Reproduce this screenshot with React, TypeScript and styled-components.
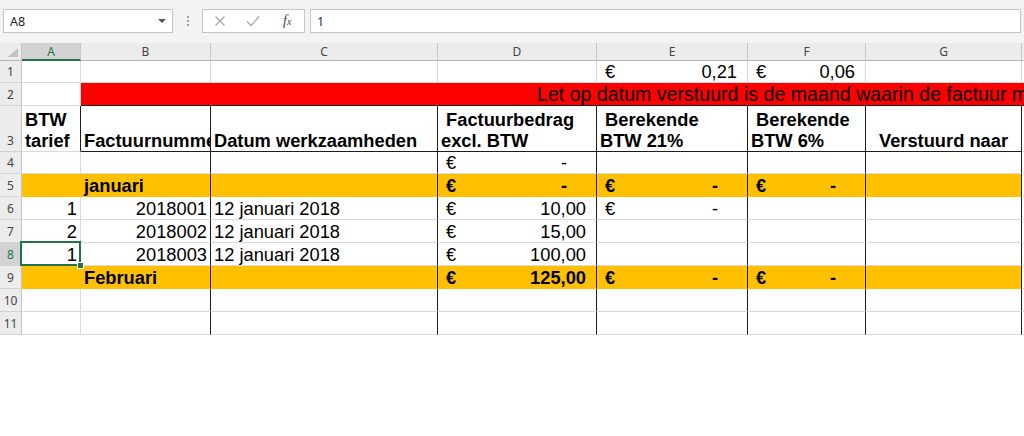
import React from 'react';
import styled, { createGlobalStyle } from 'styled-components';

const GRID = '#dadada';
const BORDER = '#1c1c1c';
const YELLOW = '#ffc000';
const RED = '#ff0000';
const GREEN = '#217346';
const HEAD_BG = '#ececec';
const HEAD_LINE = '#c6c6c6';

const GlobalStyle = createGlobalStyle`
  html, body { margin: 0; padding: 0; background: #fff; }
  body { font-family: "Liberation Sans", Arial, sans-serif; }
`;

const Toolbar = styled.div`
  display: flex;
  align-items: flex-start;
  height: 43px;
  box-sizing: border-box;
  padding: 9px 3px 0 3px;
  background: #f3f3f3;
`;

const NameBox = styled.div`
  box-sizing: border-box;
  width: 170px;
  height: 24px;
  background: #fff;
  border: 1px solid ${HEAD_LINE};
  display: flex;
  align-items: center;
  justify-content: space-between;
  padding: 0 6px 0 6px;
  font: 12.5px "Noto Sans", sans-serif;
  color: #222;
`;

const Grip = styled.div`
  width: 29px;
  height: 24px;
  display: flex;
  flex-direction: column;
  align-items: center;
  justify-content: center;
  gap: 2px;
`;

const Dot = styled.span`
  width: 2px;
  height: 2px;
  background: #a0a0a0;
`;

const FxBox = styled.div`
  box-sizing: border-box;
  width: 103px;
  height: 24px;
  background: #fff;
  border: 1px solid ${HEAD_LINE};
  display: grid;
  grid-template-columns: repeat(3, 1fr);
  align-items: center;
  justify-items: center;
`;

const FxLabel = styled.span`
  font: italic 14px "Liberation Serif", serif;
  color: #444;
  & > small { font-size: 10px; }
`;

const FormulaInput = styled.div`
  box-sizing: border-box;
  flex: 1;
  height: 24px;
  margin-left: 5px;
  background: #fff;
  border: 1px solid ${HEAD_LINE};
  display: flex;
  align-items: center;
  padding-left: 6px;
  font: 12.5px "Noto Sans", sans-serif;
  color: #1f2f4a;
`;

const Sheet = styled.div`
  display: grid;
  grid-template-columns: 22px 59px 130px 227px 159px 151px 118px 156px 2px;
  grid-template-rows: 18px 22px 23px 46px 22px repeat(7, 23px);
`;

const Corner = styled.div`
  box-sizing: border-box;
  background: ${HEAD_BG};
  border-right: 1px solid ${HEAD_LINE};
  border-bottom: 1px solid #b4b4b4;
  display: flex;
  align-items: flex-end;
  justify-content: flex-end;
  padding: 0 3px 3px 0;
`;

const ColHead = styled.div<{ $active?: boolean; $plain?: boolean }>`
  box-sizing: border-box;
  background: ${p => (p.$active ? '#d3d3d3' : HEAD_BG)};
  border-right: 1px solid ${p => (p.$plain ? HEAD_BG : HEAD_LINE)};
  border-bottom: ${p => (p.$active ? `2px solid ${GREEN}` : '1px solid #b4b4b4')};
  display: flex;
  align-items: center;
  justify-content: center;
  font: 12px "Noto Sans", sans-serif;
  color: ${p => (p.$active ? GREEN : '#444')};
`;

const RowHead = styled.div<{ $active?: boolean }>`
  box-sizing: border-box;
  background: ${p => (p.$active ? '#d3d3d3' : HEAD_BG)};
  border-right: 1px solid ${HEAD_LINE};
  border-bottom: 1px solid #d2d2d2;
  display: flex;
  align-items: flex-end;
  justify-content: center;
  padding-bottom: 2px;
  font: 12px "Noto Sans", sans-serif;
  color: ${p => (p.$active ? GREEN : '#444')};
`;

type CellProps = {
  $bg?: string;
  $bold?: boolean;
  $align?: 'left' | 'right' | 'center';
  $br?: boolean;
  $bb?: boolean;
  $selected?: boolean;
};

const Cell = styled.div<CellProps>`
  position: relative;
  box-sizing: border-box;
  min-width: 0;
  overflow: ${p => (p.$selected ? 'visible' : 'hidden')};
  z-index: ${p => (p.$selected ? 2 : 'auto')};
  display: flex;
  align-items: flex-end;
  justify-content: ${p =>
    p.$align === 'right' ? 'flex-end' : p.$align === 'center' ? 'center' : 'flex-start'};
  padding: 0 3px 0 3px;
  background: ${p => p.$bg ?? '#fff'};
  border-right: 1px solid ${p => (p.$br ? BORDER : p.$bg ?? GRID)};
  border-bottom: 1px solid ${p => (p.$bb ? BORDER : p.$bg ?? GRID)};
  font-size: 18.3px;
  line-height: 21px;
  font-weight: ${p => (p.$bold ? 700 : 400)};
  color: #000;
  white-space: pre;
`;

const HeadCell = styled(Cell)`
  flex-direction: column;
  align-items: ${p => (p.$align === 'center' ? 'center' : 'flex-start')};
  justify-content: flex-end;
  font-weight: 700;
`;

const AccCell = styled(Cell)`
  justify-content: space-between;
  padding: 0 10px 0 8px;
`;

const AccValue = styled.span<{ $dash?: boolean }>`
  margin-right: ${p => (p.$dash ? '19px' : '0')};
`;

const Banner = styled.div`
  grid-column: 3 / -1;
  box-sizing: border-box;
  background: ${RED};
  border-bottom: 1px solid ${BORDER};
  display: flex;
  align-items: center;
  padding-left: 456px;
  overflow: hidden;
  white-space: pre;
  font-size: 19.6px;
  line-height: 22px;
  color: #000;
`;

const Selection = styled.span`
  position: absolute;
  left: -2px;
  top: -2px;
  right: -1px;
  bottom: -1px;
  border: 2px solid ${GREEN};
  pointer-events: none;
`;

const FillHandle = styled.span`
  position: absolute;
  right: -4px;
  bottom: -4px;
  width: 5px;
  height: 5px;
  background: ${GREEN};
  border: 1px solid #fff;
`;

const Acc = ({ value, ...rest }: CellProps & { value: string }) => (
  <AccCell {...rest}>
    <span>€</span>
    <AccValue $dash={value === '-'}>{value}</AccValue>
  </AccCell>
);

const Head = ({ lines, ...rest }: CellProps & { lines: string[] }) => (
  <HeadCell {...rest}>
    {lines.map((l, i) => (
      <span key={i}>{l}</span>
    ))}
  </HeadCell>
);

const CloseIcon = () => (
  <svg width="12" height="12" viewBox="0 0 12 12">
    <path d="M1.5 1.5 L10.5 10.5 M10.5 1.5 L1.5 10.5" stroke="#a8a8a8" strokeWidth="1.3" fill="none" />
  </svg>
);

const CheckIcon = () => (
  <svg width="14" height="12" viewBox="0 0 14 12">
    <path d="M1 6.5 L5 10.5 L13 1.5" stroke="#a8a8a8" strokeWidth="1.3" fill="none" />
  </svg>
);

const Caret = () => (
  <svg width="8" height="4" viewBox="0 0 8 4">
    <path d="M0 0 L8 0 L4 4 Z" fill="#555" />
  </svg>
);

const CornerTriangle = () => (
  <svg width="10" height="9" viewBox="0 0 10 9">
    <path d="M10 0 L10 9 L0 9 Z" fill="#c2c2c2" />
  </svg>
);

const Y = { $bg: YELLOW };

export default function App() {
  return (
    <>
      <GlobalStyle />
      <Toolbar>
        <NameBox>
          <span>A8</span>
          <Caret />
        </NameBox>
        <Grip>
          <Dot />
          <Dot />
          <Dot />
        </Grip>
        <FxBox>
          <CloseIcon />
          <CheckIcon />
          <FxLabel>
            f<small>x</small>
          </FxLabel>
        </FxBox>
        <FormulaInput>1</FormulaInput>
      </Toolbar>
      <Sheet>
        <Corner>
          <CornerTriangle />
        </Corner>
        <ColHead $active>A</ColHead>
        <ColHead>B</ColHead>
        <ColHead>C</ColHead>
        <ColHead>D</ColHead>
        <ColHead>E</ColHead>
        <ColHead>F</ColHead>
        <ColHead>G</ColHead>
        <ColHead $plain />

        {/* row 1 */}
        <RowHead>1</RowHead>
        <Cell />
        <Cell />
        <Cell />
        <Cell />
        <Acc value="0,21" />
        <Acc value="0,06" />
        <Cell />
        <Cell />

        {/* row 2 */}
        <RowHead>2</RowHead>
        <Cell />
        <Banner>Let op datum verstuurd is de maand waarin de factuur m</Banner>

        {/* row 3 */}
        <RowHead>3</RowHead>
        <Head lines={['BTW', 'tarief']} $br />
        <Head lines={['Factuurnumme']} $br $bb />
        <Head lines={['Datum werkzaamheden']} $br $bb />
        <Head lines={[' Factuurbedrag', 'excl. BTW']} $br $bb />
        <Head lines={[' Berekende', 'BTW 21%']} $br $bb />
        <Head lines={[' Berekende', 'BTW 6%']} $br $bb />
        <Head lines={['Verstuurd naar']} $align="center" $br $bb />
        <Cell />

        {/* row 4 */}
        <RowHead>4</RowHead>
        <Cell />
        <Cell $br />
        <Cell $br />
        <Acc value="-" $br />
        <Cell $br />
        <Cell $br />
        <Cell $br />
        <Cell />

        {/* row 5 */}
        <RowHead>5</RowHead>
        <Cell {...Y} />
        <Cell {...Y} $bold $br>januari</Cell>
        <Cell {...Y} $br />
        <Acc {...Y} $bold $br value="-" />
        <Acc {...Y} $bold $br value="-" />
        <Acc {...Y} $bold $br value="-" />
        <Cell {...Y} $br />
        <Cell />

        {/* row 6 */}
        <RowHead>6</RowHead>
        <Cell $align="right">1</Cell>
        <Cell $align="right" $br>2018001</Cell>
        <Cell $br>12 januari 2018</Cell>
        <Acc value="10,00" $br />
        <Acc value="-" $br />
        <Cell $br />
        <Cell $br />
        <Cell />

        {/* row 7 */}
        <RowHead>7</RowHead>
        <Cell $align="right">2</Cell>
        <Cell $align="right" $br>2018002</Cell>
        <Cell $br>12 januari 2018</Cell>
        <Acc value="15,00" $br />
        <Cell $br />
        <Cell $br />
        <Cell $br />
        <Cell />

        {/* row 8 */}
        <RowHead $active>8</RowHead>
        <Cell $align="right" $selected>
          1
          <Selection />
          <FillHandle />
        </Cell>
        <Cell $align="right" $br>2018003</Cell>
        <Cell $br>12 januari 2018</Cell>
        <Acc value="100,00" $br />
        <Cell $br />
        <Cell $br />
        <Cell $br />
        <Cell />

        {/* row 9 */}
        <RowHead>9</RowHead>
        <Cell {...Y} />
        <Cell {...Y} $bold $br>Februari</Cell>
        <Cell {...Y} $br />
        <Acc {...Y} $bold $br value="125,00" />
        <Acc {...Y} $bold $br value="-" />
        <Acc {...Y} $bold $br value="-" />
        <Cell {...Y} $br />
        <Cell />

        {/* rows 10, 11 */}
        {[10, 11].map(n => (
          <React.Fragment key={n}>
            <RowHead>{n}</RowHead>
            <Cell />
            <Cell $br />
            <Cell $br />
            <Cell $br />
            <Cell $br />
            <Cell $br />
            <Cell $br />
            <Cell />
          </React.Fragment>
        ))}
      </Sheet>
    </>
  );
}
